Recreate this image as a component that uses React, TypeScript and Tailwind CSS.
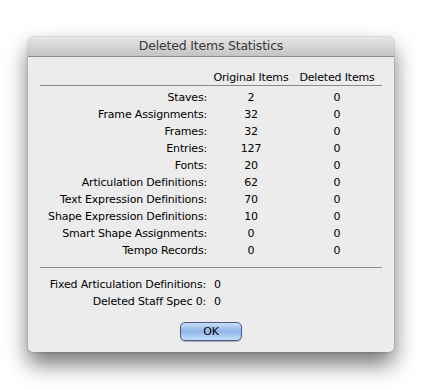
const rows: [string, string, string][] = [
  ["Staves:", "2", "0"],
  ["Frame Assignments:", "32", "0"],
  ["Frames:", "32", "0"],
  ["Entries:", "127", "0"],
  ["Fonts:", "20", "0"],
  ["Articulation Definitions:", "62", "0"],
  ["Text Expression Definitions:", "70", "0"],
  ["Shape Expression Definitions:", "10", "0"],
  ["Smart Shape Assignments:", "0", "0"],
  ["Tempo Records:", "0", "0"],
];

const extras: [string, string][] = [
  ["Fixed Articulation Definitions:", "0"],
  ["Deleted Staff Spec 0:", "0"],
];

export default function App() {
  return (
    <div className="h-[389px] w-[422px] bg-white pl-[28px] pt-[37px] font-['DejaVu_Sans',sans-serif] text-[11px] tracking-[-0.17px] text-black">
      <div className="flex h-[315px] w-[366px] flex-col overflow-hidden rounded-[5px] bg-[#ececec] shadow-[0_12px_22px_rgba(0,0,0,0.55),0_0_2px_rgba(0,0,0,0.3)]">
        <div className="flex h-[20px] items-center justify-center border-b border-[#8c8c8c] bg-gradient-to-b from-[#e6e6e6] to-[#c4c4c4] text-[12.5px] tracking-[-0.2px] text-[#3a3a3a]">
          Deleted Items Statistics
        </div>

        <div className="flex flex-col px-3 pt-[13px]">
          <div className="grid h-[16px] grid-cols-[167px_88px_84px] items-center border-b border-[#8a8a8a]">
            <span />
            <span className="text-center">Original Items</span>
            <span className="text-center">Deleted Items</span>
          </div>

          <div className="mt-[4px] flex flex-col">
            {rows.map(([label, orig, del]) => (
              <div
                key={label}
                className="grid h-[17px] grid-cols-[167px_88px_84px] items-center"
              >
                <span className="text-right">{label}</span>
                <span className="text-center">{orig}</span>
                <span className="text-center">{del}</span>
              </div>
            ))}
          </div>

          <div className="mt-[7px] border-t border-[#8a8a8a]" />

          <div className="mt-[9px] flex flex-col">
            {extras.map(([label, value]) => (
              <div key={label} className="flex h-[17px] items-center">
                <span className="w-[166px] text-right">{label}</span>
                <span className="pl-[8px]">{value}</span>
              </div>
            ))}
          </div>

          <div className="mt-[11px] flex justify-center">
            <button className="h-[19px] w-[62px] rounded-[5px] border border-[#4b5a8c] bg-gradient-to-b from-[#c9dcf6] via-[#8fb5ea] to-[#c3e0fb] text-[11px] leading-none text-black shadow-[0_1px_1px_rgba(0,0,0,0.25)]">
              OK
            </button>
          </div>
        </div>
      </div>
    </div>
  );
}
